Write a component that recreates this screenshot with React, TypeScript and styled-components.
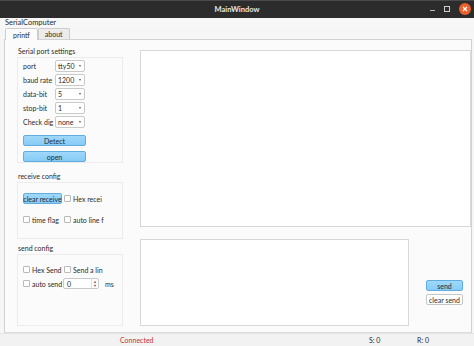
import styled, { createGlobalStyle } from 'styled-components';

const GlobalStyle = createGlobalStyle`
	html, body {
		margin: 0;
		padding: 0;
		background: #f5f5f5;
	}
	body {
		width: 474px;
		height: 346px;
		overflow: hidden;
		font-family: Lato, 'Liberation Sans', sans-serif;
		font-size: 7px;
		color: #2b2b2b;
	}
`;

const Window = styled.div`
	display: flex;
	flex-direction: column;
	width: 474px;
	height: 346px;
	background: #f6f6f6;
`;

const TitleBar = styled.div`
	position: relative;
	height: 18px;
	flex: none;
	display: flex;
	align-items: center;
	justify-content: center;
	background: #2c2c2c;
	border-top: 1px solid #4a4a4a;
	box-sizing: border-box;
	color: #e8e8e8;
	font-weight: 700;
	font-size: 7.5px;
`;

const Controls = styled.div`
	position: absolute;
	right: 3px;
	top: 2px;
	display: flex;
	align-items: center;
	gap: 9px;
`;

const MinIcon = styled.span`
	width: 5px;
	height: 1px;
	margin-top: 3px;
	background: #bdbdbd;
`;

const MaxIcon = styled.span`
	width: 4px;
	height: 4px;
	border: 1px solid #cfcfcf;
`;

const CloseIcon = styled.span`
	width: 12px;
	height: 12px;
	border-radius: 50%;
	background: #e9622e;
	display: flex;
	align-items: center;
	justify-content: center;
`;

const MenuBar = styled.div`
	height: 9px;
	flex: none;
	padding-left: 5px;
	line-height: 9px;
	font-size: 7.5px;
	background: #f7f7f7;
`;

const TabBar = styled.div`
	height: 12px;
	flex: none;
	display: flex;
	align-items: flex-end;
	padding-left: 5px;
`;

const Tab = styled.div<{ $active?: boolean }>`
	height: ${({ $active }) => ($active ? 12 : 11)}px;
	box-sizing: border-box;
	padding: 0 ${({ $active }) => ($active ? 7 : 6)}px;
	border: 1px solid #cdcdcd;
	border-bottom: none;
	border-radius: 2px 2px 0 0;
	background: ${({ $active }) => ($active ? '#fbfbfb' : '#ececec')};
	line-height: ${({ $active }) => ($active ? 12 : 10)}px;
	margin-bottom: ${({ $active }) => ($active ? -1 : 0)}px;
	position: relative;
	z-index: ${({ $active }) => ($active ? 1 : 0)};
`;

const Pane = styled.div`
	flex: none;
	height: 294px;
	box-sizing: border-box;
	margin: 0 2px 0 4px;
	border: 1px solid #d2d2d2;
	border-bottom-color: #dcdcdc;
	background: #fbfbfb;
	display: flex;
	padding: 0 0 0 12px;
	gap: 17px;
`;

const LeftColumn = styled.div`
	width: 106px;
	display: flex;
	flex-direction: column;
	padding-top: 6px;
`;

const SectionTitle = styled.div<{ $top: number }>`
	height: 11px;
	line-height: 10px;
	padding-left: 1px;
	margin-top: ${({ $top }) => $top}px;
`;

const Frame = styled.div<{ $height: number; $padTop: number }>`
	height: ${({ $height }) => $height}px;
	box-sizing: border-box;
	border: 1px solid #ececec;
	padding: ${({ $padTop }) => $padTop}px 0 0 5px;
	display: flex;
	flex-direction: column;
`;

const FormRows = styled.div`
	display: flex;
	flex-direction: column;
	gap: 2px;
`;

const FormRow = styled.div`
	display: flex;
	align-items: center;
	height: 12px;
`;

const FieldLabel = styled.span`
	width: 32px;
	white-space: nowrap;
`;

const Combo = styled.div`
	width: 30px;
	height: 12px;
	box-sizing: border-box;
	border: 1px solid #c9c9c9;
	border-radius: 2px;
	background: #ffffff;
	display: flex;
	align-items: center;
	justify-content: space-between;
	padding: 0 3px 0 2px;
`;

const Caret = styled.span`
	width: 0;
	height: 0;
	border-left: 1.5px solid transparent;
	border-right: 1.5px solid transparent;
	border-top: 2px solid #555;
`;

const BlueButton = styled.div<{ $width: number; $top?: number }>`
	width: ${({ $width }) => $width}px;
	height: 11px;
	box-sizing: border-box;
	margin-top: ${({ $top }) => $top ?? 0}px;
	border: 1px solid #62ade0;
	border-radius: 2px;
	background: linear-gradient(#9fd8fb, #86cbf5);
	display: flex;
	align-items: center;
	justify-content: center;
	white-space: nowrap;
	color: #1f2a33;
	flex: none;
`;

const PlainButton = styled.div`
	width: 37px;
	height: 11px;
	box-sizing: border-box;
	border: 1px solid #c6c6c6;
	border-radius: 2px;
	background: #ffffff;
	display: flex;
	align-items: center;
	justify-content: center;
	white-space: nowrap;
`;

const CheckRow = styled.div<{ $top?: number }>`
	display: flex;
	align-items: center;
	height: 11px;
	margin-top: ${({ $top }) => $top ?? 0}px;
`;

const Check = styled.div<{ $labelWidth: number; $gap?: number }>`
	display: flex;
	align-items: center;
	margin-left: ${({ $gap }) => $gap ?? 0}px;
	span {
		width: ${({ $labelWidth }) => $labelWidth}px;
		white-space: nowrap;
	}
`;

const Box = styled.i`
	width: 5px;
	height: 5px;
	border: 1px solid #b9b9b9;
	border-radius: 1px;
	background: #ffffff;
	margin-right: 2px;
	flex: none;
`;

const SpinBox = styled.div`
	width: 36px;
	height: 11px;
	box-sizing: border-box;
	border: 1px solid #c9c9c9;
	border-radius: 2px;
	background: #ffffff;
	display: flex;
	align-items: center;
	justify-content: space-between;
	padding-left: 3px;
`;

const SpinArrows = styled.div`
	height: 100%;
	width: 6px;
	border-left: 1px solid #e2e2e2;
	display: flex;
	flex-direction: column;
	align-items: center;
	justify-content: center;
	gap: 1px;
	font-size: 4px;
	line-height: 3px;
	color: #666;
`;

const Unit = styled.span`
	margin-left: 6px;
`;

const RightColumn = styled.div`
	width: 331px;
	display: flex;
	flex-direction: column;
	padding-top: 10px;
	gap: 12px;
`;

const TextArea = styled.div<{ $width: number; $height: number }>`
	width: ${({ $width }) => $width}px;
	height: ${({ $height }) => $height}px;
	box-sizing: border-box;
	border: 1px solid #d8d8d8;
	background: #ffffff;
	flex: none;
`;

const SendRow = styled.div`
	display: flex;
	gap: 17px;
`;

const SendButtons = styled.div`
	display: flex;
	flex-direction: column;
	gap: 3px;
	padding-top: 41px;
`;

const StatusBar = styled.div`
	flex: 1;
	display: flex;
	align-items: center;
	padding-left: 120px;
	background: #f2f2f2;
	border-top: 1px solid #e4e4e4;
	white-space: nowrap;
`;

const StatusItem = styled.span<{ $width: number; $color?: string }>`
	width: ${({ $width }) => $width}px;
	color: ${({ $color }) => $color ?? '#2b2b2b'};
`;

const ports = [
	{ label: 'port', value: 'tty50' },
	{ label: 'baud rate', value: '1200' },
	{ label: 'data-bit', value: '5' },
	{ label: 'stop-bit', value: '1' },
	{ label: 'Check dig', value: 'none' },
];

export default function App() {
	return (
		<>
			<GlobalStyle />
			<Window>
				<TitleBar>
					MainWindow
					<Controls>
						<MinIcon />
						<MaxIcon />
						<CloseIcon>
							<svg width="6" height="6" viewBox="0 0 6 6">
								<path d="M1 1L5 5M5 1L1 5" stroke="#fff" strokeWidth="1.1" />
							</svg>
						</CloseIcon>
					</Controls>
				</TitleBar>
				<MenuBar>SerialComputer</MenuBar>
				<TabBar>
					<Tab $active>printf</Tab>
					<Tab>about</Tab>
				</TabBar>
				<Pane>
					<LeftColumn>
						<SectionTitle $top={0}>Serial port settings</SectionTitle>
						<Frame $height={106} $padTop={2}>
							<FormRows>
								{ports.map((p) => (
									<FormRow key={p.label}>
										<FieldLabel>{p.label}</FieldLabel>
										<Combo>
											{p.value}
											<Caret />
										</Combo>
									</FormRow>
								))}
							</FormRows>
							<BlueButton $width={63} $top={7}>Detect</BlueButton>
							<BlueButton $width={63} $top={5}>open</BlueButton>
						</Frame>

						<SectionTitle $top={8}>receive config</SectionTitle>
						<Frame $height={57} $padTop={10}>
							<CheckRow>
								<BlueButton $width={39}>clear receive</BlueButton>
								<Check $labelWidth={29} $gap={2}>
									<Box />
									<span>Hex recei</span>
								</Check>
							</CheckRow>
							<CheckRow $top={10}>
								<Check $labelWidth={32}>
									<Box />
									<span>time flag</span>
								</Check>
								<Check $labelWidth={29}>
									<Box />
									<span>auto line f</span>
								</Check>
							</CheckRow>
						</Frame>

						<SectionTitle $top={4}>send config</SectionTitle>
						<Frame $height={72} $padTop={9}>
							<CheckRow>
								<Check $labelWidth={32}>
									<Box />
									<span>Hex Send</span>
								</Check>
								<Check $labelWidth={29}>
									<Box />
									<span>Send a lin</span>
								</Check>
							</CheckRow>
							<CheckRow $top={3}>
								<Check $labelWidth={31}>
									<Box />
									<span>auto send</span>
								</Check>
								<SpinBox>
									0
									<SpinArrows>
										<span>▲</span>
										<span>▼</span>
									</SpinArrows>
								</SpinBox>
								<Unit>ms</Unit>
							</CheckRow>
						</Frame>
					</LeftColumn>

					<RightColumn>
						<TextArea $width={331} $height={177} />
						<SendRow>
							<TextArea $width={269} $height={87} />
							<SendButtons>
								<BlueButton $width={37}>send</BlueButton>
								<PlainButton>clear send</PlainButton>
							</SendButtons>
						</SendRow>
					</RightColumn>
				</Pane>
				<StatusBar>
					<StatusItem $width={249} $color="#c8313a">Connected</StatusItem>
					<StatusItem $width={48}>S: 0</StatusItem>
					<StatusItem $width={40}>R: 0</StatusItem>
				</StatusBar>
			</Window>
		</>
	);
}
